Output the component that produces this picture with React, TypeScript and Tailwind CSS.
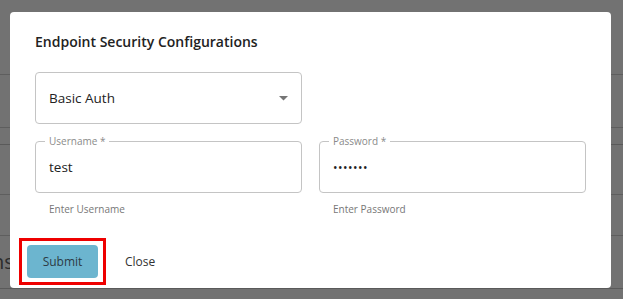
import { useState } from 'react';

const font = { fontFamily: '"Open Sans", "Noto Sans", sans-serif' };

function OutlinedField({ label, value, helper, secret }: { label: string; value: string; helper: string; secret?: boolean }) {
    return (
        <div>
            <div className="relative h-[52px] rounded-[4px] border border-[#c4c4c4] flex items-center px-[13px]">
                <span className="absolute left-[9px] top-[-8px] bg-white px-[4px] text-[10px] leading-[14px] text-[#8a8a8a]">
                    {label}
                </span>
                {secret ? (
                    <span className="text-[12px] tracking-[0.5px] text-[#222] pt-[1px]">{'•'.repeat(value.length)}</span>
                ) : (
                    <span className="text-[13.5px] text-[#222] pt-[1px]">{value}</span>
                )}
            </div>
            <p className="mt-[9px] pl-[14px] text-[10px] leading-[14px] text-[#777]">{helper}</p>
        </div>
    );
}

export default function App() {
    const [auth] = useState('Basic Auth');

    return (
        <div className="relative w-[623px] h-[299px] overflow-hidden bg-[#727272]" style={font}>
            {/* page behind the backdrop */}
            <div className="absolute inset-0 flex flex-col">
                <div className="h-[75px] border-b border-[#5e5e5e]" />
                <div className="h-[53px] border-b border-[#5e5e5e]" />
                <div className="h-[17px] border-b border-[#5a5a5a]" />
                <div className="h-[50px] border-b border-[#5e5e5e]" />
                <div className="h-[41px] border-b border-[#5e5e5e]" />
                <div className="h-[53px] border-b border-[#5a5a5a] flex items-center">
                    <span className="ml-[-8px] text-[20px] text-[#2c2c2c]">ns</span>
                </div>
            </div>

            {/* modal */}
            <div className="absolute left-[10px] top-[12px] w-[601px] h-[276px] bg-white rounded-[4px] px-[25px] pt-[20px]">
                <h2 className="text-[14px] leading-[20px] font-semibold text-[#222]">Endpoint Security Configurations</h2>

                <div className="mt-[20px] grid grid-cols-[267px_267px] gap-x-[17px]">
                    <div className="h-[52px] rounded-[4px] border border-[#c4c4c4] flex items-center justify-between pl-[13px] pr-[13px]">
                        <span className="text-[13.5px] text-[#222] pt-[1px]">{auth}</span>
                        <svg width="9" height="5" viewBox="0 0 9 5">
                            <path d="M0 0 L9 0 L4.5 4.5 Z" fill="#757575" />
                        </svg>
                    </div>
                    <div />
                </div>

                <div className="mt-[17px] grid grid-cols-[267px_267px] gap-x-[17px]">
                    <OutlinedField label="Username *" value="test" helper="Enter Username" />
                    <OutlinedField label="Password *" value="1234567" helper="Enter Password" secret />
                </div>

                <div className="mt-[22px] ml-[-16px] flex items-center gap-[14px]">
                    <div className="border-[3px] border-[#ee0000] px-[5px] py-[4px]">
                        <button className="block w-[71px] h-[33px] rounded-[4px] bg-[#6cb5cf] text-[12px] text-[#2d3b45]">Submit</button>
                    </div>
                    <button className="px-[5px] h-[33px] text-[12px] text-[#333]">Close</button>
                </div>
            </div>
        </div>
    );
}
